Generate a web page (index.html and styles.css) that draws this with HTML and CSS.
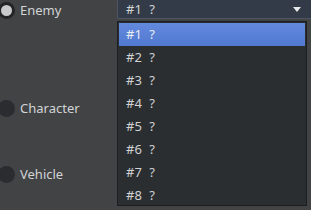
FILE: index.html
```html
<!DOCTYPE html>
<html>
<head>
<meta charset="utf-8">
<link rel="stylesheet" href="styles.css">
</head>
<body>
<div class="panel">
  <div class="radios">
    <label class="radio r-enemy"><span class="dot checked"></span><span class="lbl">Enemy</span></label>
    <label class="radio r-char"><span class="dot"></span><span class="lbl">Character</span></label>
    <label class="radio r-veh"><span class="dot"></span><span class="lbl">Vehicle</span></label>
  </div>
  <div class="combo">
    <div class="button">
      <span class="val">#1 ?</span>
      <svg class="arrow" width="8" height="5" viewBox="0 0 8 5"><path d="M0 0H8L4 5Z" fill="#e6e8ea"/></svg>
    </div>
    <ul class="popup">
      <li class="sel">#1 ?</li>
      <li>#2 ?</li>
      <li>#3 ?</li>
      <li>#4 ?</li>
      <li>#5 ?</li>
      <li>#6 ?</li>
      <li>#7 ?</li>
      <li>#8 ?</li>
    </ul>
  </div>
</div>
</body>
</html>
```
FILE: styles.css
```css
html, body {
  margin: 0;
  padding: 0;
  width: 311px;
  height: 210px;
  overflow: hidden;
  background: #414345;
  font-family: "Noto Sans", "Open Sans", sans-serif;
  font-size: 13px;
  color: #d2d4d6;
}
.panel {
  display: flex;
  height: 210px;
}
.radios {
  width: 117px;
  display: flex;
  flex-direction: column;
  flex-shrink: 0;
}
.radio {
  display: flex;
  align-items: center;
  gap: 5px;
  margin-left: -2px;
  height: 20px;
}
.r-enemy { margin-top: 0; }
.r-char { margin-top: 78px; }
.r-veh { margin-top: 46px; }
.dot {
  width: 17px;
  height: 17px;
  border-radius: 50%;
  background: #2a2c2f;
  box-sizing: border-box;
  flex-shrink: 0;
}
.dot.checked {
  background: #c9cacc;
  border: 3px solid #222426;
}
.lbl {
  line-height: 20px;
}
.combo {
  position: relative;
  flex: 1;
}
.button {
  height: 20px;
  box-sizing: border-box;
  margin-top: -1px;
  background: #323b47;
  border: 1px solid #4c5560;
  border-right: none;
  border-radius: 2px 0 0 2px;
  display: flex;
  align-items: center;
  justify-content: space-between;
  padding: 0 10px 0 8px;
}
.val { line-height: 18px; word-spacing: 4px; }
.popup {
  position: absolute;
  left: 0;
  top: 21px;
  width: 190px;
  margin: 0;
  padding: 1px;
  list-style: none;
  background: #2b2e31;
  border: 1px solid #1c1e20;
  box-sizing: border-box;
  height: 185px;
}
.popup li {
  height: 23px;
  line-height: 23px;
  padding-left: 7px;
  color: #d0d2d4;
  word-spacing: 4px;
}
.popup li.sel {
  background: linear-gradient(#6389dc, #5079d0);
  color: #e8ecf4;
}
```
